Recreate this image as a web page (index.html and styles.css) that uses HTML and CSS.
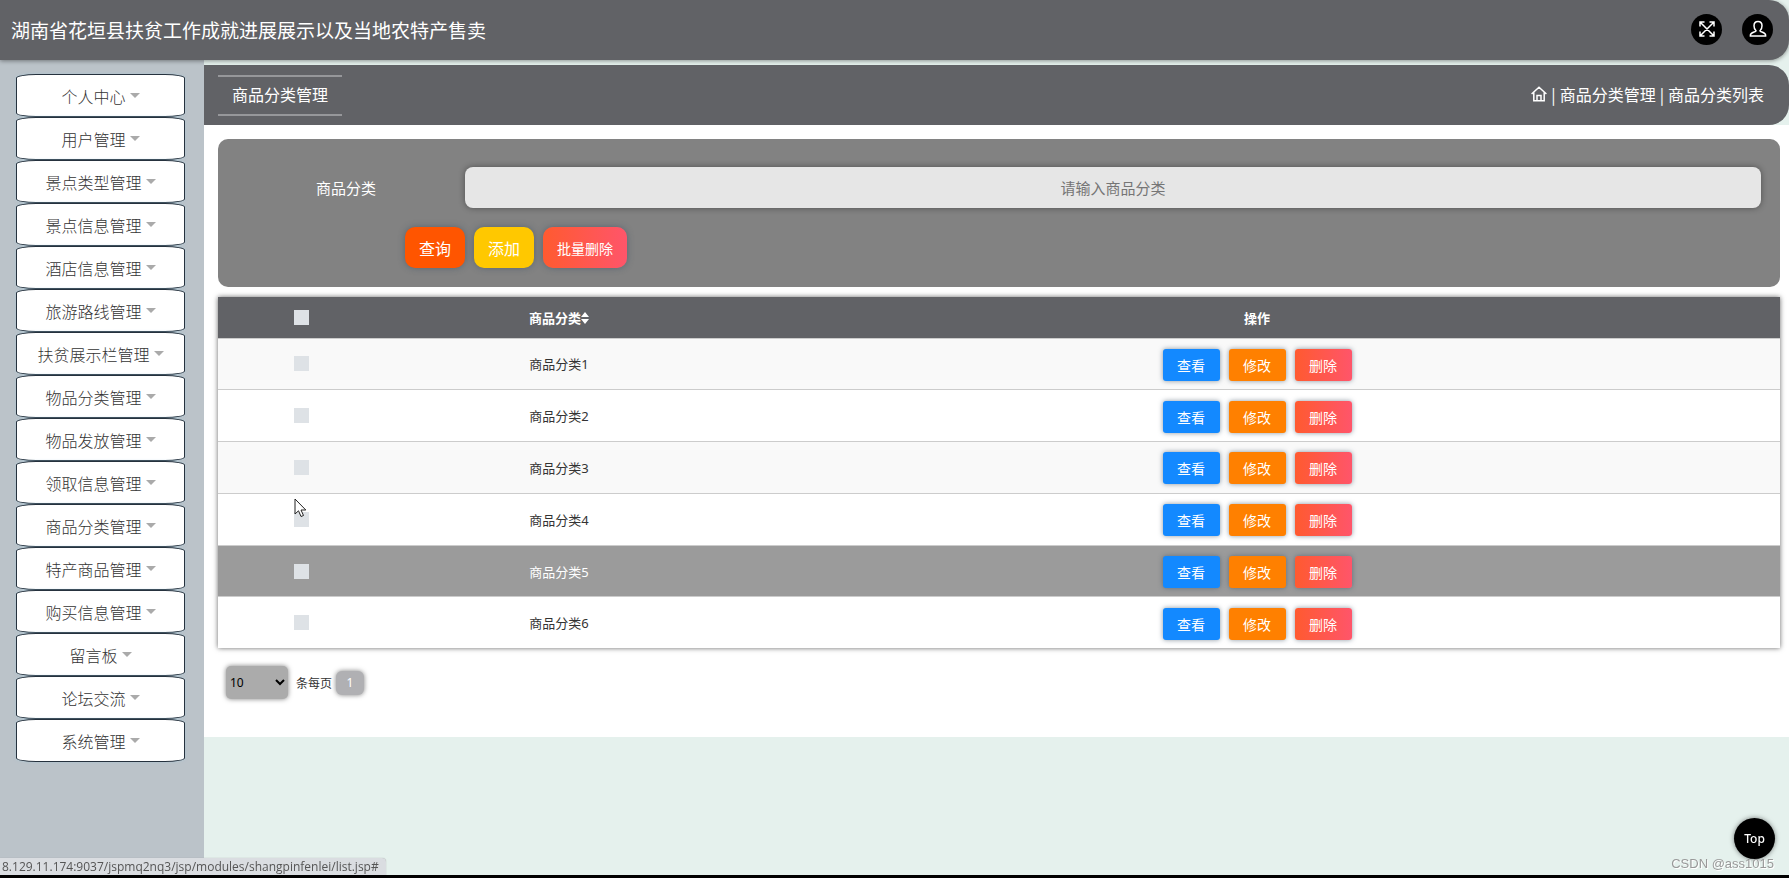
FILE: index.html
```html
<!DOCTYPE html>
<html lang="zh-CN">
<head>
    <meta charset="UTF-8">
    <title>商品分类列表</title>
    <link rel="stylesheet" href="styles.css">
</head>
<body>
    <header class="navbar">
        <h1 class="navbar-title">湖南省花垣县扶贫工作成就进展展示以及当地农特产售卖</h1>
        <div class="navbar-tools">
            <button type="button" class="round-btn" aria-label="全屏">
                <svg width="16" height="16" viewBox="0 0 16 16" fill="none" stroke="#fff" stroke-width="1.5">
                    <path d="M1.5 1.5l13 13M14.5 1.5l-13 13M1 5.5V1h4.500M10.500 1H15v4.500M15 10.500V15h-4.500M5.500 15H1v-4.500"/>
                </svg>
            </button>
            <button type="button" class="round-btn" aria-label="用户">
                <svg width="18" height="18" viewBox="0 0 18 18" fill="none" stroke="#fff" stroke-width="1.5">
                    <path d="M7 10.800C5.600 9.500 5 7.900 5 5.800 5 3 6.600 1.500 9 1.500s4 1.500 4 4.300c0 2.100-.6 3.700-2 5 .2 1.200 5.600 1.400 5.600 4.200v1H1.400v-1c0-2.800 5.400-3 5.600-4.200z"/>
                </svg>
            </button>
        </div>
    </header>

    <div class="wrapper">
        <!-- Sidebar -->
        <nav class="sidebar">
            <ul class="menu">
                <li><a href="#">个人中心</a></li>
                <li><a href="#">用户管理</a></li>
                <li><a href="#">景点类型管理</a></li>
                <li><a href="#">景点信息管理</a></li>
                <li><a href="#">酒店信息管理</a></li>
                <li><a href="#">旅游路线管理</a></li>
                <li><a href="#">扶贫展示栏管理</a></li>
                <li><a href="#">物品分类管理</a></li>
                <li><a href="#">物品发放管理</a></li>
                <li><a href="#">领取信息管理</a></li>
                <li><a href="#">商品分类管理</a></li>
                <li><a href="#">特产商品管理</a></li>
                <li><a href="#">购买信息管理</a></li>
                <li><a href="#">留言板</a></li>
                <li><a href="#">论坛交流</a></li>
                <li><a href="#">系统管理</a></li>
            </ul>
        </nav>

        <!-- Page content -->
        <main class="main">
            <div class="page-head">
                <h2 class="page-title">商品分类管理</h2>
                <div class="breadcrumb">
                    <a href="#" aria-label="首页">
                        <svg width="16" height="16" viewBox="0 0 16 16" fill="none" stroke="#fff" stroke-width="1.5">
                            <path d="M.6 8L8 1.200 15.400 8M2.800 6.500v8.300h10.400V6.500M6 14.800V9.500h4v5.300"/>
                        </svg>
                    </a>
                    <span>|</span>
                    <span>商品分类管理</span>
                    <span>|</span>
                    <span>商品分类列表</span>
                </div>
            </div>

            <div class="content">
                <form class="search">
                    <div class="search-row">
                        <label for="fenlei">商品分类</label>
                        <input type="text" id="fenlei" placeholder="请输入商品分类">
                    </div>
                    <div class="search-buttons">
                        <button type="button" class="btn-search">查询</button>
                        <button type="button" class="btn-add">添加</button>
                        <button type="button" class="btn-batch">批量删除</button>
                    </div>
                </form>

                <table class="list">
                    <thead>
                        <tr>
                            <th class="col-check"><input type="checkbox" aria-label="全选"></th>
                            <th class="col-name">商品分类<svg class="sort" width="8" height="12" viewBox="0 0 8 12" fill="#fff"><path d="M0 5l4-5 4 5zM0 7h8l-4 5z"/></svg></th>
                            <th>操作</th>
                        </tr>
                    </thead>
                    <tbody>
                        <tr>
                            <td><input type="checkbox" aria-label="商品分类1"></td>
                            <td>商品分类1</td>
                            <td><div class="actions"><button type="button" class="view">查看</button><button type="button" class="edit">修改</button><button type="button" class="del">删除</button></div></td>
                        </tr>
                        <tr>
                            <td><input type="checkbox" aria-label="商品分类2"></td>
                            <td>商品分类2</td>
                            <td><div class="actions"><button type="button" class="view">查看</button><button type="button" class="edit">修改</button><button type="button" class="del">删除</button></div></td>
                        </tr>
                        <tr>
                            <td><input type="checkbox" aria-label="商品分类3"></td>
                            <td>商品分类3</td>
                            <td><div class="actions"><button type="button" class="view">查看</button><button type="button" class="edit">修改</button><button type="button" class="del">删除</button></div></td>
                        </tr>
                        <tr>
                            <td><input type="checkbox" aria-label="商品分类4"></td>
                            <td>商品分类4</td>
                            <td><div class="actions"><button type="button" class="view">查看</button><button type="button" class="edit">修改</button><button type="button" class="del">删除</button></div></td>
                        </tr>
                        <tr class="active">
                            <td><input type="checkbox" aria-label="商品分类5"></td>
                            <td>商品分类5</td>
                            <td><div class="actions"><button type="button" class="view">查看</button><button type="button" class="edit">修改</button><button type="button" class="del">删除</button></div></td>
                        </tr>
                        <tr>
                            <td><input type="checkbox" aria-label="商品分类6"></td>
                            <td>商品分类6</td>
                            <td><div class="actions"><button type="button" class="view">查看</button><button type="button" class="edit">修改</button><button type="button" class="del">删除</button></div></td>
                        </tr>
                    </tbody>
                </table>

                <div class="pager">
                    <select id="pageSize">
                        <option>10</option>
                        <option>25</option>
                        <option>50</option>
                    </select>
                    <label for="pageSize">条每页</label>
                    <button type="button" class="page-num">1</button>
                </div>
            </div>
        </main>
    </div>

    <button type="button" class="to-top">Top</button>
    <div class="watermark">CSDN @ass1015</div>
    <div class="status">8.129.11.174:9037/jspmq2nq3/jsp/modules/shangpinfenlei/list.jsp#</div>
    <div class="bottom-edge"></div>
    <svg class="cursor" width="13" height="20" viewBox="0 0 13 20" fill="#fff" stroke="#222" stroke-width="1">
        <path d="M1 1v15l3.500-3.200L7 18.500l2.500-1L7 12h4.800z"/>
    </svg>
</body>
</html>
```
FILE: styles.css
```css
* {
    box-sizing: border-box;
}
body {
    margin: 0;
    min-height: 100vh;
    display: flex;
    flex-direction: column;
    font-family: "Noto Sans", "Noto Sans CJK SC", sans-serif;
    font-size: 13px;
    color: #333;
    background-color: #e5f1ed;
}
button, input, select {
    font-family: inherit;
}
button {
    border: none;
    padding: 0;
    color: #fff;
    cursor: pointer;
}
a {
    color: inherit;
    text-decoration: none;
}

/* header */
.navbar {
    position: relative;
    height: 60px;
    padding: 0 16px 0 11px;
    display: flex;
    justify-content: space-between;
    align-items: center;
    background-color: #616266;
    border-radius: 0 20px 20px 0;
    box-shadow: 0 1px 4px rgba(0,0,0,0.4);
}
.navbar-title {
    margin: 0;
    padding-top: 2px;
    font-size: 19px;
    line-height: 28px;
    font-weight: normal;
    color: #fff;
}
.navbar-tools {
    display: flex;
    gap: 20px;
    padding-bottom: 2px;
}
.round-btn {
    width: 31px;
    height: 31px;
    display: flex;
    justify-content: center;
    align-items: center;
    border-radius: 50%;
    background-color: #000;
}
.wrapper {
    flex: 1;
    display: flex;
}

/* sidebar */
.sidebar {
    width: 204px;
    padding: 14px 19px 14px 16px;
    background-color: #bbc3c9;
}
.menu {
    list-style: none;
    margin: 0;
    padding: 0;
}
.menu a {
    height: 43px;
    display: flex;
    justify-content: center;
    align-items: center;
    gap: 4px;
    font-size: 16px;
    font-weight: 300;
    background-color: #fff;
    border: 1px solid #26323e;
    border-radius: 20px / 4px;
    box-shadow: 0 0 3px rgba(160,200,220,0.6);
}
.menu a::after {
    content: "";
    border: 5px solid transparent;
    border-top-color: #aaa;
    border-bottom: none;
}

/* content */
.main {
    flex: 1;
    padding-top: 5px;
}
.page-head {
    height: 60px;
    padding: 0 25px 0 14px;
    display: flex;
    justify-content: space-between;
    align-items: center;
    background-color: #616266;
    border-radius: 0 20px 20px 0;
    color: #fff;
    font-size: 16px;
}
.page-title {
    margin: 0;
    padding: 0 14px;
    font-size: 16px;
    font-weight: normal;
    line-height: 37px;
    border-top: 2px solid #96979a;
    border-bottom: 2px solid #96979a;
}
.breadcrumb {
    display: flex;
    align-items: center;
    gap: 4px;
    padding-bottom: 2px;
    font-family: "Noto Sans CJK SC", sans-serif;
}
.breadcrumb svg {
    display: block;
}
.content {
    padding: 14px 9px 38px 14px;
    background-color: #fff;
}
.search {
    height: 148px;
    padding: 28px 19px 18px;
    background-color: #828282;
    border-radius: 10px;
}
.search-row {
    display: flex;
    align-items: center;
}
.search-row label {
    width: 228px;
    padding-left: 79px;
    font-size: 15px;
    color: #fff;
}
.search-row input {
    flex: 1;
    height: 41px;
    border: none;
    border-radius: 8px;
    background-color: #e6e6e6;
    box-shadow: 0 0 6px rgba(0,0,0,0.4);
    font-size: 15px;
    text-align: center;
}
.search-row input::placeholder {
    color: #757575;
}
.search-buttons {
    display: flex;
    gap: 9px;
    padding: 19px 0 0 168px;
}
.search-buttons button {
    height: 41px;
    padding: 0 14px;
    border-radius: 10px;
    font-size: 16px;
    box-shadow: 0 0 6px rgba(60,80,100,0.6);
}
.search-buttons .btn-search {
    background-color: #ff5500;
}
.search-buttons .btn-add {
    background-color: #ffc800;
}
.search-buttons .btn-batch {
    font-size: 14px;
    background: linear-gradient(to right, #ff5a30, #ff556a);
}

/* table */
.list {
    width: 100%;
    height: 351px;
    margin-top: 10px;
    table-layout: fixed;
    border-collapse: collapse;
    text-align: center;
    box-shadow: 0 0 5px rgba(0,0,0,0.6);
}
.list th, .list td {
    padding: 0;
}
.list th {
    height: 41px;
    color: #fff;
    background-color: #616266;
}
.list td {
    border-top: 1px solid #ccc;
}
.list tbody tr:nth-child(odd) {
    background-color: #f9f9f9;
}
.list tbody tr.active {
    color: #fff;
    background-color: #9b9b9b;
}
.col-check {
    width: 166px;
}
.col-name {
    width: 350px;
}
.sort {
    vertical-align: -1px;
}
.list input {
    appearance: none;
    display: block;
    width: 15px;
    height: 15px;
    margin: 0 auto;
    background-color: #dee2e6;
}
.actions {
    display: flex;
    justify-content: center;
    gap: 9px;
    padding-top: 2px;
}
.actions button {
    width: 57px;
    height: 32px;
    border-radius: 3px;
    font-size: 14px;
    box-shadow: 0 0 5px rgba(60,80,100,0.6);
}
.actions .view {
    background-color: #1389ff;
}
.actions .edit {
    background-color: #ff8000;
}
.actions .del {
    background: linear-gradient(to right, #ff5a30, #ff556a);
}

/* pager */
.pager {
    display: flex;
    align-items: center;
    padding: 18px 8px 0;
    font-size: 12px;
}
.pager select {
    width: 62px;
    height: 33px;
    border: none;
    border-radius: 5px;
    font-size: 12px;
    color: #000;
    background-color: #ababab;
    box-shadow: 0 0 5px rgba(0,0,0,0.5);
}
.pager label {
    padding: 0 4px 0 8px;
}
.page-num {
    width: 28px;
    height: 24px;
    border-radius: 6px;
    font-size: 12px;
    background-color: #b0b0b3;
    box-shadow: 0 0 5px rgba(0,0,0,0.5);
}

/* floating things */
.to-top {
    position: fixed;
    right: 14px;
    bottom: 19px;
    width: 41px;
    height: 41px;
    border-radius: 50%;
    background-color: #000;
    font-size: 12px;
    font-weight: 500;
    box-shadow: 0 0 5px rgba(0,0,0,0.5);
}
.watermark {
    position: fixed;
    right: 15px;
    bottom: 6px;
    font-family: "Liberation Sans", Arial, sans-serif;
    font-size: 13px;
    line-height: 16px;
    color: #999;
    text-shadow: 1px 1px 0 #fff;
}
.status {
    position: fixed;
    left: 0;
    bottom: 3px;
    padding: 1px 7px 0 2px;
    font-family: "Open Sans", sans-serif;
    font-size: 12px;
    line-height: 16px;
    color: #555;
    background-color: #dadde1;
    border-radius: 0 4px 0 0;
    box-shadow: 0 0 1px #999;
}
.bottom-edge {
    position: fixed;
    left: 0;
    right: 0;
    bottom: 0;
    height: 3px;
    background-color: #000;
}
.cursor {
    position: absolute;
    left: 294px;
    top: 498px;
}
```
